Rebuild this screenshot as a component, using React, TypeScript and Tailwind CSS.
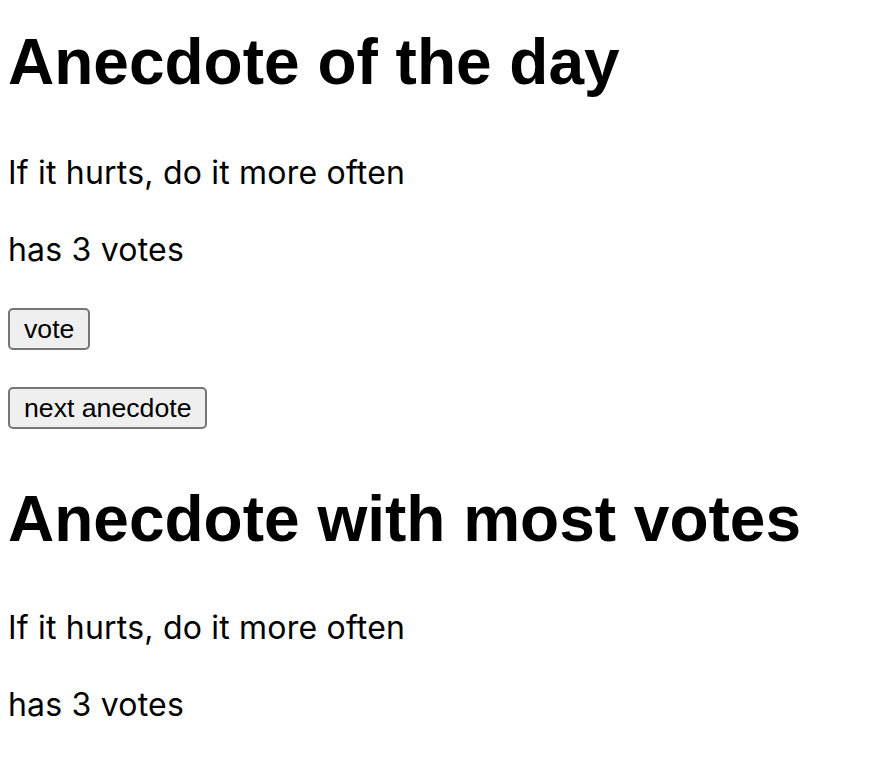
import { useState } from 'react';

const anecdotes = ['If it hurts, do it more often'];

const Button = ({ label, onClick }: { label: string; onClick: () => void }) => (
  <button
    onClick={onClick}
    className="block h-[42px] px-[14px] border-2 border-[#767676] rounded-[5px] bg-[#efefef] text-black text-[26.67px] leading-[30px] font-['Liberation_Sans',Arial,sans-serif]"
  >
    {label}
  </button>
);

export default function App() {
  const [selected, setSelected] = useState(0);
  const [votes, setVotes] = useState<number[]>([3]);

  const mostVoted = votes.indexOf(Math.max(...votes));

  return (
    <div className="min-h-[770px] bg-white text-black px-2 pt-[25px] font-['Inter','Noto_Sans',sans-serif]">
      <h1 className="text-[64px] leading-[74px] font-bold font-['Liberation_Sans',Arial,sans-serif]">
        Anecdote of the day
      </h1>
      <p className="mt-[51px] text-[32px] leading-[45px] tracking-[0.2px]">{anecdotes[selected]}</p>
      <p className="mt-[32px] text-[32px] leading-[45px] tracking-[0.2px]">has {votes[selected]} votes</p>
      <div className="mt-[36px]">
        <Button
          label="vote"
          onClick={() => setVotes(votes.map((v, i) => (i === selected ? v + 1 : v)))}
        />
      </div>
      <div className="mt-[37px]">
        <Button label="next anecdote" onClick={() => setSelected((selected + 1) % anecdotes.length)} />
      </div>
      <h1 className="mt-[53px] text-[64px] leading-[74px] font-bold font-['Liberation_Sans',Arial,sans-serif]">
        Anecdote with most votes
      </h1>
      <p className="mt-[49px] text-[32px] leading-[45px] tracking-[0.2px]">{anecdotes[mostVoted]}</p>
      <p className="mt-[32px] text-[32px] leading-[45px] tracking-[0.2px]">has {votes[mostVoted]} votes</p>
    </div>
  );
}
